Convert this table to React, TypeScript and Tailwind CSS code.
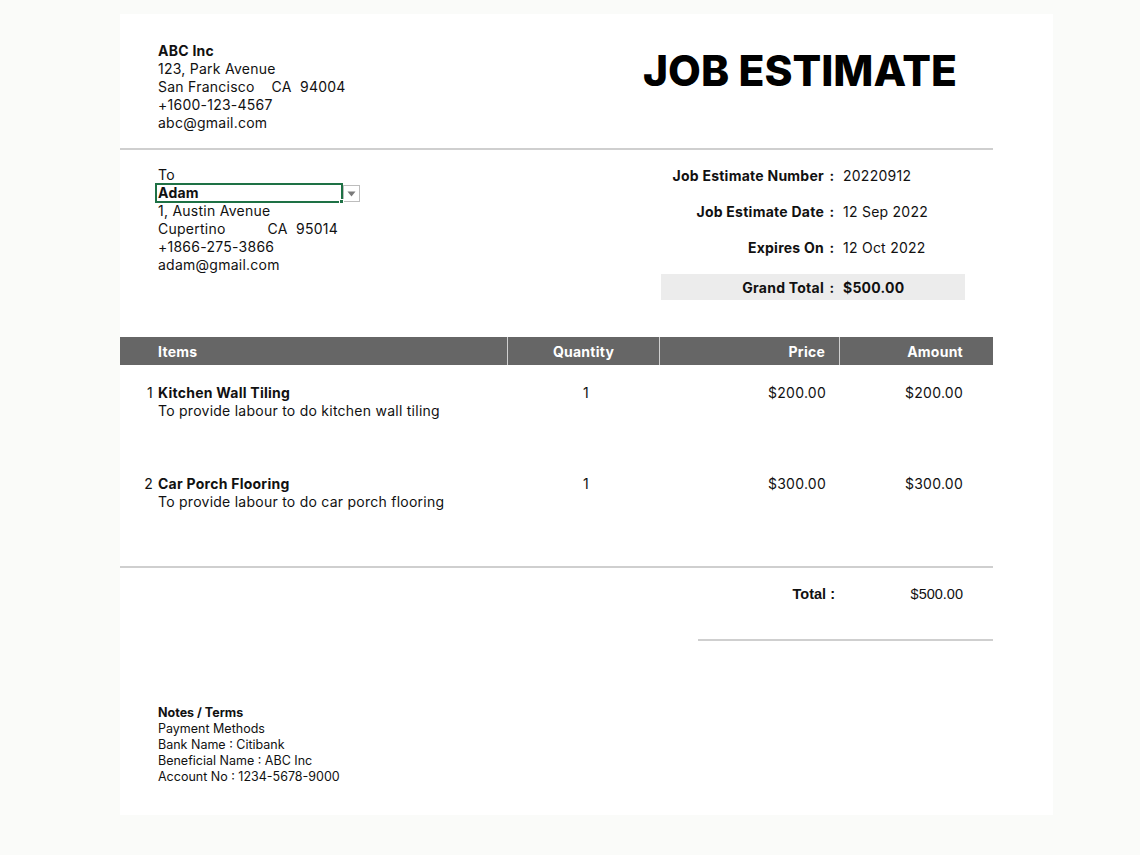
import React from "react";

const font = { fontFamily: "Inter, 'Noto Sans', sans-serif" };

function InfoRow({ label, value, bold }: { label: string; value: string; bold?: boolean }) {
  return (
    <div className="flex items-center h-[18px]">
      <div className="w-[164px] text-right font-bold whitespace-nowrap">{label}</div>
      <div className="w-[16px] text-center font-bold">:</div>
      <div className={"pl-[3px] " + (bold ? "font-bold" : "")}>{value}</div>
    </div>
  );
}

function ItemRow({ n, title, desc, qty, price, amount }: { n: string; title: string; desc: string; qty: string; price: string; amount: string }) {
  return (
    <div className="flex h-[91px] pt-[19px]">
      <div className="w-[388px] flex">
        <div className="w-[38px] text-right pr-[5px] leading-[18px]">{n}</div>
        <div className="leading-[18px]">
          <div className="font-bold">{title}</div>
          <div>{desc}</div>
        </div>
      </div>
      <div className="w-[152px] text-center leading-[18px] pl-[4px]">{qty}</div>
      <div className="w-[180px] text-right pr-[14px] leading-[18px]">{price}</div>
      <div className="w-[153px] text-right pr-[30px] leading-[18px]">{amount}</div>
    </div>
  );
}

export default function App() {
  return (
    <div className="min-h-screen bg-[#fafbf9] pt-[14px]" style={font}>
      <div className="ml-[120px] w-[933px] h-[801px] bg-white text-[14px] tracking-[0.25px] text-[#111]">
        {/* Header */}
        <div className="flex pt-[28px] w-[873px]">
          <div className="pl-[38px] leading-[18px] w-[420px]">
            <div className="font-bold">ABC Inc</div>
            <div>123, Park Avenue</div>
            <div className="whitespace-pre">San Francisco    CA  94004</div>
            <div>+1600-123-4567</div>
            <div>abc@gmail.com</div>
          </div>
          <div className="flex-1 flex justify-end pr-[36px]">
            <div className="text-[42.5px] font-extrabold tracking-[0px] leading-[58px] text-black">JOB ESTIMATE</div>
          </div>
        </div>
        <div className="w-[873px] h-[2px] bg-[#cfcfcf] mt-[16px]" />

        {/* To + info */}
        <div className="flex w-[873px] pt-[16px]">
          <div className="w-[540px] pl-[38px] leading-[18px]">
            <div>To</div>
            <div className="flex">
              <div className="relative -ml-[3px] w-[188px] h-[20px] -my-[1px] border-2 border-[#1e7145] pl-[1px] font-bold leading-[16px]">
                Adam
                <div className="absolute -right-[3px] -bottom-[3px] w-[5px] h-[5px] bg-[#1e7145] border border-white" />
              </div>
              <div className="w-[17px] h-[17px] border border-[#bdbdbd] bg-white flex items-center justify-center mt-[1px]">
                <svg width="9" height="6" viewBox="0 0 9 6"><path d="M0.5 0.5 L8.5 0.5 L4.5 5.5 Z" fill="#7a7a7a" /></svg>
              </div>
            </div>
            <div>1, Austin Avenue</div>
            <div className="whitespace-pre">Cupertino          CA  95014</div>
            <div>+1866-275-3866</div>
            <div>adam@gmail.com</div>
          </div>
          <div className="flex-1">
            <InfoRow label="Job Estimate Number" value="20220912" />
            <div className="h-[18px]" />
            <InfoRow label="Job Estimate Date" value="12 Sep 2022" />
            <div className="h-[18px]" />
            <InfoRow label="Expires On" value="12 Oct 2022" />
            <div className="mt-[18px] ml-[1px] w-[304px] h-[26px] bg-[#ececec] flex items-center">
              <div className="w-[163px] text-right font-bold">Grand Total</div>
              <div className="w-[16px] text-center font-bold">:</div>
              <div className="pl-[3px] font-bold">$500.00</div>
            </div>
          </div>
        </div>

        {/* Table */}
        <div className="w-[873px] mt-[37px]">
          <div className="flex h-[28px] bg-[#666666] text-white font-bold items-center">
            <div className="w-[388px] pl-[38px] border-r border-[#d0d0d0] h-full flex items-center">Items</div>
            <div className="w-[152px] text-center border-r border-[#d0d0d0] h-full flex items-center justify-center">Quantity</div>
            <div className="w-[180px] pr-[14px] border-r border-[#d0d0d0] h-full flex items-center justify-end">Price</div>
            <div className="w-[153px] pr-[30px] h-full flex items-center justify-end">Amount</div>
          </div>
          <ItemRow n="1" title="Kitchen Wall Tiling" desc="To provide labour to do kitchen wall tiling" qty="1" price="$200.00" amount="$200.00" />
          <ItemRow n="2" title="Car Porch Flooring" desc="To provide labour to do car porch flooring" qty="1" price="$300.00" amount="$300.00" />
          <div className="h-[19px]" />
          <div className="h-[2px] bg-[#cfcfcf]" />
          <div className="flex pt-[17px] h-[71px] tracking-normal" style={{ fontFamily: "'Liberation Sans', Arial, sans-serif" }}>
            <div className="w-[540px]" />
            <div className="w-[180px] text-right pr-[5px] font-bold text-[14.5px] leading-[18px]">Total :</div>
            <div className="w-[153px] text-right pr-[30px] text-[14.5px] leading-[18px]">$500.00</div>
          </div>
          <div className="ml-[578px] h-[2px] bg-[#cfcfcf]" />
        </div>

        {/* Notes */}
        <div className="pl-[38px] pt-[64px] text-[12.5px] tracking-normal leading-[16px]">
          <div className="font-bold">Notes / Terms</div>
          <div>Payment Methods</div>
          <div>Bank Name : Citibank</div>
          <div>Beneficial Name : ABC Inc</div>
          <div>Account No : 1234-5678-9000</div>
        </div>
      </div>
    </div>
  );
}
